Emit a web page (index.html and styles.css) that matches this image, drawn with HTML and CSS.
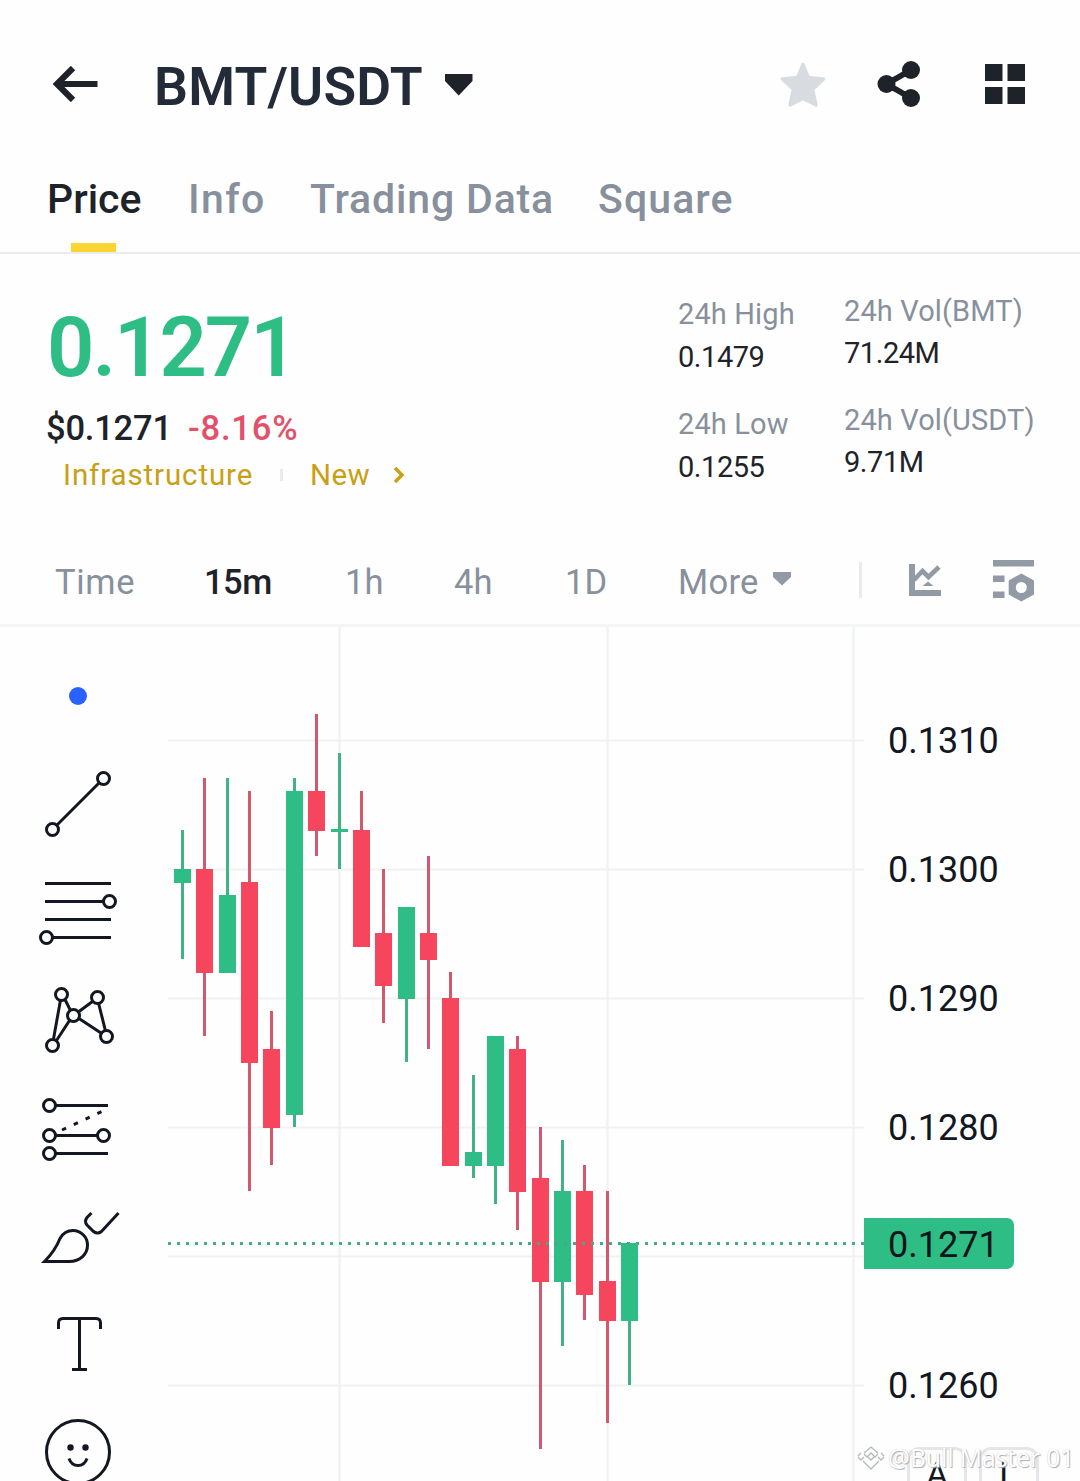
FILE: index.html
```html
<!DOCTYPE html>
<html lang="en">
<head>
<meta charset="utf-8">
<title>BMT/USDT</title>
<link rel="stylesheet" href="styles.css">
</head>
<body>
<main class="screen">
  <header class="header">
    <svg class="back" width="46" height="36" viewBox="0 0 46 36"><path d="M45.500 18H6M21 2L5 18l16 16" fill="none" stroke="#1e2329" stroke-width="6.200"/></svg>
    <h1 class="pair">BMT/USDT</h1>
    <svg class="pair-caret" width="28" height="22" viewBox="0 0 28 22"><path d="M0 0h27.500v7L13.700 21.500 0 7z" fill="#1e2329"/></svg>
    <div class="actions">
      <svg width="46" height="46" viewBox="0 0 46 46"><path d="M23 3.500l5.200 13 15.300 1.500-11 10.500 3.500 15.500L23 37.500 10 44 13.500 28.500 2.500 18l15.300-1.500z" fill="#d8dce1" stroke="#d8dce1" stroke-width="3.500" stroke-linejoin="round"/></svg>
      <svg width="46" height="46" viewBox="0 0 46 46"><g fill="#1e2329"><path d="M10.500 23L35 9M10.500 23L35 37" stroke="#1e2329" stroke-width="6"/><circle cx="10.500" cy="23" r="9"/><circle cx="35" cy="9" r="9"/><circle cx="35" cy="37" r="9"/></g></svg>
      <svg width="40" height="40" viewBox="0 0 40 40"><path d="M0 0h17.500v17H0zM22.500 0H40v17H22.500zM0 23h17.500v17H0zM22.500 23H40v17H22.500z" fill="#1e2329"/></svg>
    </div>
  </header>

  <nav class="tabs">
    <a class="tab tab-active">Price</a>
    <a class="tab tab-info">Info</a>
    <a class="tab tab-data">Trading Data</a>
    <a class="tab tab-square">Square</a>
  </nav>

  <section class="summary">
    <div class="quote">
      <div class="last">0.1271</div>
      <div class="change"><span class="fiat">$0.1271</span><span class="percent">-8.16%</span></div>
      <div class="tags">
        <span class="tag-infra">Infrastructure</span><i class="tag-rule"></i><span class="tag-new">New</span>
        <svg width="12" height="18" viewBox="0 0 12 18"><path d="M2 2l7 7-7 7" fill="none" stroke="#c99f16" stroke-width="3.400"/></svg>
      </div>
    </div>
    <dl class="stats stats-range">
      <dt>24h High</dt><dd>0.1479</dd>
      <dt>24h Low</dt><dd>0.1255</dd>
    </dl>
    <dl class="stats stats-volume">
      <dt>24h Vol(BMT)</dt><dd>71.24M</dd>
      <dt>24h Vol(USDT)</dt><dd>9.71M</dd>
    </dl>
  </section>

  <nav class="intervals">
    <a class="iv-time">Time</a>
    <a class="iv-15m">15m</a>
    <a class="iv-1h">1h</a>
    <a class="iv-4h">4h</a>
    <a class="iv-1d">1D</a>
    <a class="iv-more">More</a>
    <svg class="more-caret" width="18" height="14" viewBox="0 0 18 14"><path d="M0 0h18v5L9 13.500 0 5z" fill="#929aa5"/></svg>
    <i class="iv-rule"></i>
    <svg class="iv-chart" width="32" height="32" viewBox="0 0 32 32"><path d="M3 0v29h29" fill="none" stroke="#929aa5" stroke-width="6"/><path d="M5 16l8.500-9 6 6L30 3" fill="none" stroke="#929aa5" stroke-width="4.600"/><path d="M13.500 22L19 17.500l5.500 4.500z" fill="#929aa5"/></svg>
    <svg class="iv-settings" width="42" height="42" viewBox="0 0 42 42"><path d="M0 0h41v6.500H0zM0 15.500h11.500V22H0zM0 31.500h11.500V38H0z" fill="#929aa5"/><path fill-rule="evenodd" d="M28.300 13.500L41 20.500v14L28.300 41.500 15.700 34.500v-14zM28.300 22a5.500 5.500 0 1 0 0 11 5.500 5.500 0 0 0 0-11z" fill="#929aa5"/></svg>
  </nav>

  <section class="chart">
    <svg class="tools" width="168" height="854" viewBox="0 627 168 854">
      <circle cx="78" cy="696" r="9" fill="#2962ff"/>
      <g fill="none" stroke="#131722" stroke-width="3">
        <path d="M57 825L99 783"/><circle cx="52.500" cy="829.500" r="6"/><circle cx="103.500" cy="778.500" r="6"/>
        <path d="M45 883.500h66M45 901.500h58M45 919.500h66M53 937.500h58"/><circle cx="109.500" cy="901.500" r="6"/><circle cx="46.500" cy="937.500" r="6"/>
        <path d="M60.500 1000L53.500 1039M65 999.500l5 10M56.500 1040.500l13-20M79 1011.500l13.500-10M79 1018.500l22 14.500M98.500 1003l7 28"/>
        <circle cx="61.500" cy="994.500" r="6"/><circle cx="97.500" cy="997.500" r="6"/><circle cx="73.500" cy="1015.500" r="6"/><circle cx="52.500" cy="1045.500" r="6"/><circle cx="106.500" cy="1036.500" r="6"/>
        <path d="M56 1105.500h52M56 1135.500h41M56 1153.500h52"/><path d="M62 1130l41-19" stroke-dasharray="4.500 8.500"/>
        <circle cx="49.500" cy="1105.500" r="6"/><circle cx="49.500" cy="1135.500" r="6"/><circle cx="103.500" cy="1135.500" r="6"/><circle cx="49.500" cy="1153.500" r="6"/>
        <path d="M44.500 1261.500C54 1252 57 1246 60 1238.500C63 1233 67 1230.500 73 1230.500C81 1230.500 87.500 1237 87.500 1245C87.500 1254 80.500 1261.500 69 1261.500z"/>
        <path d="M91.500 1213l-4.500 4.500q-3 4 0 7.500l6.500 6.500q4 3 8 0l17-18.500"/>
        <path d="M58.500 1329v-6q0-4.500 4.500-4.500h33q4.500 0 4.500 4.500v6M79.500 1318.500v51M72 1369.500h15"/>
        <circle cx="78" cy="1452" r="31.500"/><path d="M69 1458.500q2.500 7 9 7t9-7"/>
      </g>
      <circle cx="70.500" cy="1447.500" r="3.200" fill="#131722"/><circle cx="85.500" cy="1447.500" r="3.200" fill="#131722"/>
    </svg>

    <svg class="plot" width="696" height="854" viewBox="168 627 696 854">
      <path d="M339.500 627v854M607.500 627v854M853.500 627v854M168 740.500h696M168 869.500h696M168 998.500h696M168 1127.500h696M168 1256.500h696M168 1385.500h696" stroke="#f0f1f2" stroke-width="2.200"/>
      <g shape-rendering="crispEdges">
        <path stroke="#41b285" stroke-width="3" d="M182.500 830V959M227.500 778V973M294.500 778V1127M339.500 753V869M406.500 907V1062M473.500 1075V1178M495.500 1036V1204M562.500 1140V1346M629.500 1243V1385"/>
        <path stroke="#d4586c" stroke-width="3" d="M204.500 778V1036M249.500 791V1191M271.500 1011V1165M316.500 714V856M361.500 791V947M383.500 869V1023M428.500 856V1049M450.500 972V1166M517.500 1036V1230M540.500 1127V1449M584.500 1165V1320M607.500 1191V1423"/>
        <path stroke="#2ebd85" stroke-width="17" d="M182.500 869V883M227.500 895V973M294.500 791V1115M339.500 829V832M406.500 907V999M473.500 1152V1166M495.500 1036V1166M562.500 1191V1282M629.500 1243V1321"/>
        <path stroke="#f6465d" stroke-width="17" d="M204.500 869V973M249.500 882V1063M271.500 1049V1128M316.500 791V831M361.500 830V947M383.500 933V986M428.500 933V960M450.500 998V1166M517.500 1049V1192M540.500 1178V1282M584.500 1191V1295M607.500 1281V1321"/>
        <path stroke="#46aa87" stroke-width="3" stroke-dasharray="3 6" d="M168 1243.500h696"/>
      </g>
    </svg>

    <div class="axis">
      <span>0.1310</span>
      <span>0.1300</span>
      <span>0.1290</span>
      <span>0.1280</span>
      <b class="current">0.1271</b>
      <span>0.1260</span>
      <div class="scale-buttons"><button>A</button><button class="log">L</button></div>
    </div>

    <div class="watermark">
      <svg width="28" height="24" viewBox="0 0 28 24"><g fill="none" stroke="#b4b7bc" stroke-width="1.300"><path d="M7 7l7-6 7 6M7 8l3 3 4-4 4 4 3-3M1 11l3 3 3-3M21 11l3 3 3-3M1 10l3-3M27 10l-3-3M11 11l3 3 3-3M6 15l8 8 8-8"/></g></svg>
      <span>@Bull Master 01</span>
    </div>
  </section>
</main>
</body>
</html>
```
FILE: styles.css
```css
* {
  box-sizing: border-box;
}

body {
  margin: 0;
  background: #fefefe;
  color: #1e2329;
  font-family: Roboto, "Liberation Sans", sans-serif;
}

svg {
  display: block;
  flex: none;
}

.screen {
  width: 1080px;
  height: 1481px;
  overflow: hidden;
  white-space: nowrap;
}

.header {
  display: flex;
  align-items: center;
  height: 172px;
  padding: 0 55px 0 52px;
}

.back {
  margin-bottom: 4px;
}

.pair {
  width: 290px;
  margin: 0 0 0 56px;
  color: #232b39;
  font-size: 53.500px;
  font-weight: 600;
  letter-spacing: 0.200px;
}

.pair-caret {
  margin: 0 0 2px 1px;
}

.actions {
  display: flex;
  align-items: center;
  gap: 50px;
  margin: 0 0 4px auto;
}

.actions svg:last-child {
  margin-left: 13px;
}

.tabs {
  display: flex;
  height: 82px;
  padding-left: 47px;
  border-bottom: 2px solid #eaecef;
  color: #87909c;
  font-size: 41px;
  font-weight: 500;
  line-height: 54px;
}

.tab-active {
  display: flex;
  flex-direction: column;
  width: 141px;
  color: #1e2329;
}

.tab-active::after {
  width: 45px;
  height: 9px;
  margin: 17px 0 0 24px;
  background: #fcd535;
  content: "";
}

.tab-info {
  width: 122px;
  letter-spacing: 1.400px;
}

.tab-data {
  width: 288px;
  letter-spacing: 0.850px;
}

.tab-square {
  letter-spacing: 1.100px;
}

.summary {
  display: flex;
  height: 287px;
  padding-left: 47px;
}

.quote {
  width: 631px;
  padding-top: 44px;
}

.last {
  height: 99px;
  color: #2ebd85;
  font-size: 83px;
  font-weight: 600;
  letter-spacing: -2px;
  line-height: 100px;
}

.change {
  display: flex;
  height: 62px;
  font-size: 34.500px;
  font-weight: 500;
  line-height: 62px;
}

.fiat {
  width: 142px;
  margin-left: -1px;
  letter-spacing: -0.200px;
}

.percent {
  color: #e2506a;
  letter-spacing: 0.800px;
}

.tags {
  display: flex;
  align-items: center;
  height: 32px;
  padding-left: 16px;
  color: #c99f16;
  font-size: 29.500px;
  line-height: 32px;
}

.tag-infra {
  width: 217px;
  letter-spacing: 0.880px;
}

.tag-rule {
  width: 3px;
  height: 12px;
  background: #e9ebed;
}

.tag-new {
  width: 83px;
  margin-left: 27px;
  letter-spacing: 0.400px;
}

.stats {
  width: 166px;
  margin: 0;
  padding-top: 39px;
  font-size: 29px;
  line-height: 43px;
}

.stats-volume {
  width: 230px;
  padding-top: 36px;
}

.stats dt {
  color: #87909c;
  letter-spacing: 0.120px;
}

.stats dd {
  margin: 0 0 24px;
  letter-spacing: -0.450px;
}

.stats-volume dd {
  margin-top: -1px;
}

.intervals {
  display: flex;
  align-items: center;
  height: 86px;
  padding: 1px 0 3px 55px;
  border-bottom: 3px solid #f4f5f5;
  color: #87909c;
  font-size: 34.500px;
  line-height: 82px;
}

.iv-time {
  width: 149px;
  letter-spacing: 0.700px;
}

.iv-15m {
  width: 141px;
  color: #1e2329;
  font-weight: 500;
  letter-spacing: -0.500px;
}

.iv-1h {
  width: 109px;
}

.iv-4h {
  width: 111px;
}

.iv-1d {
  width: 113px;
}

.iv-more {
  width: 95px;
  letter-spacing: 0.300px;
}

.more-caret {
  margin-bottom: 5px;
}

.iv-rule {
  width: 3px;
  height: 36px;
  margin: 0 47px 4px 68px;
  background: #eaebed;
}

.iv-chart {
  margin-bottom: 4px;
}

.iv-settings {
  margin: 0 0 2px 52px;
}

.chart {
  position: relative;
  display: flex;
  height: 854px;
}

.axis {
  display: flex;
  flex-direction: column;
  width: 216px;
  padding-top: 49px;
  color: #131722;
  font-size: 36px;
}

.axis span {
  height: 129px;
  padding-left: 24px;
  line-height: 130px;
}

.current {
  width: 150px;
  height: 51px;
  margin: 26px 0 52px;
  padding-left: 24px;
  border-radius: 0 7px 7px 0;
  background: #2ebd85;
  color: #0c1418;
  font-weight: 400;
  line-height: 54px;
}

.scale-buttons {
  display: flex;
  gap: 12px;
  margin: -3px 0 0 43px;
}

.scale-buttons button {
  width: 60px;
  height: 60px;
  padding: 0;
  border: 3px solid #e4e6ea;
  border-radius: 12px;
  background: none;
  color: #131722;
  font: 34px/48px Roboto, sans-serif;
}

.scale-buttons .log {
  padding-right: 1px;
}

.scale-buttons button {
  display: flex;
  align-items: flex-start;
  justify-content: center;
}

.watermark {
  position: absolute;
  top: 815px;
  left: 857px;
  display: flex;
  align-items: center;
  gap: 3px;
  color: #fff;
  font: 24.500px/32px "Noto Sans", sans-serif;
  letter-spacing: -0.050px;
  text-shadow: 1px 1px 1px #a9adb3, 0 0 1px #b9bcc1;
}
```
